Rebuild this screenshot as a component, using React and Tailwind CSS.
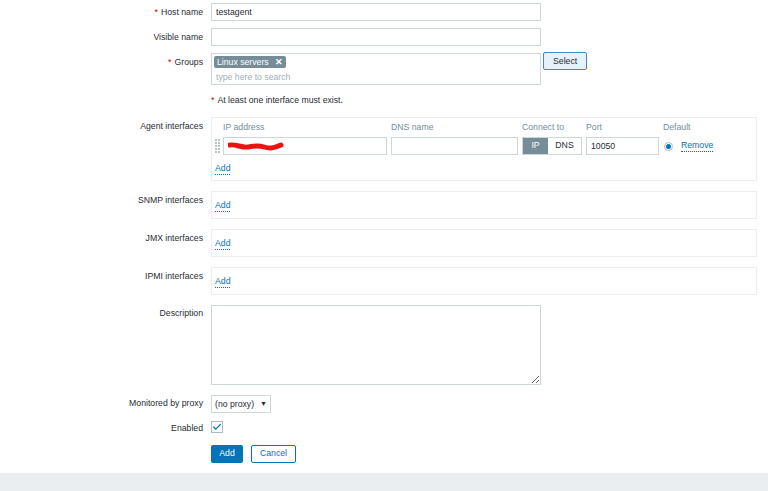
import { Check } from 'lucide-react';

const font = { fontFamily: '"Liberation Sans", Arial, sans-serif' };

function Label({ text, required, top = 'pt-[3px]' }) {
  return (
    <div className={`w-[203px] shrink-0 text-right leading-[12px] text-[#1f2c33] ${top}`}>
      {required && <span className="text-[#d40000] mr-[3px]">*</span>}
      {text}
    </div>
  );
}

function Row({ label, required, className = '', labelTop, children }) {
  return (
    <div className={`flex ${className}`}>
      <Label text={label} required={required} top={labelTop} />
      <div className="ml-2 flex-1">{children}</div>
    </div>
  );
}

function TextInput({ value, w = 'w-[330px]' }) {
  return (
    <input
      readOnly
      value={value || ''}
      className={`${w} h-[18px] border border-[#cfd6da] bg-white px-[4px] text-[8.7px] text-[#1f2c33] outline-none`}
    />
  );
}

function AddLink() {
  return (
    <span className="text-[#0275b8] border-b border-dotted border-[#0275b8] leading-[11px] inline-block">Add</span>
  );
}

function EmptyInterface({ label, className }) {
  return (
    <Row label={label} className={className} labelTop="pt-[3px]">
      <div className="w-[546px] h-[28px] border border-[#ebeef0] pl-[3px] pt-[7px]">
        <AddLink />
      </div>
    </Row>
  );
}

export default function App() {
  return (
    <div style={font} className="min-h-[491px] flex flex-col bg-white text-[8.7px] text-[#1f2c33]">
      <div className="pt-[3px]">
        {/* Host name */}
        <Row label="Host name" required>
          <TextInput value="testagent" />
        </Row>

        <Row label="Visible name" className="mt-[7px]">
          <TextInput />
        </Row>

        {/* Groups */}
        <Row label="Groups" required className="mt-[7px]">
          <div className="flex items-start gap-[2px]">
            <div className="w-[330px] h-[32px] border border-[#cfd6da] px-[2px] pt-[2px]">
              <span className="inline-flex items-center h-[12px] bg-[#768d99] text-white px-[3px] rounded-[2px] leading-[12px]">
                Linux servers
                <span className="ml-[6px] font-bold text-[9px]">✕</span>
              </span>
              <div className="text-[#a3b0b6] mt-[3px] ml-[2px] leading-[11px]">type here to search</div>
            </div>
            <button className="h-[18px] -mt-[1px] px-[9px] border border-[#3c8dc5] bg-[#e6f1f9] text-[#1f2c33] rounded-[2px] leading-[14px]">
              Select
            </button>
          </div>
        </Row>

        <Row label="" className="mt-[9px]">
          <div className="leading-[12px]"><span className="text-[#d40000] mr-[3px]">*</span>At least one interface must exist.</div>
        </Row>

        {/* Agent interfaces */}
        <Row label="Agent interfaces" className="mt-[11px]" labelTop="pt-[3px]">
          <div className="w-[546px] h-[64px] border border-[#ebeef0] pl-[3px] pt-[3px]">
            <div className="flex pl-[8px] text-[#768d99] leading-[12px]">
              <span className="w-[168px]">IP address</span>
              <span className="w-[131px]">DNS name</span>
              <span className="w-[64px]">Connect to</span>
              <span className="w-[77px]">Port</span>
              <span>Default</span>
            </div>
            <div className="flex items-center mt-[4px]">
              <div className="w-[8px] h-[17px] flex items-center">
                <svg width="6" height="14" viewBox="0 0 6 14">
                  {[0, 3, 6, 9, 12].map(y => (
                    <g key={y} fill="#b7c3c9">
                      <rect x="0" y={y} width="2" height="2" />
                      <rect x="3" y={y} width="2" height="2" />
                    </g>
                  ))}
                </svg>
              </div>
              <div className="relative w-[164px] h-[18px] border border-[#cfd6da] bg-white">
                <svg className="absolute left-[4px] top-[2px]" width="56" height="12" viewBox="0 0 56 12">
                  <path d="M2 5 C8 4, 14 8, 20 7 S 30 5, 36 7 S 46 8, 53 5" stroke="#ee1111" strokeWidth="5" fill="none" strokeLinecap="round" />
                </svg>
              </div>
              <div className="ml-[4px]"><TextInput w="w-[127px]" /></div>
              <div className="ml-[4px] flex h-[18px] w-[60px] border border-[#cfd6da]">
                <span className="w-[25px] bg-[#768d99] text-white flex items-center justify-center">IP</span>
                <span className="flex-1 bg-white flex items-center justify-center">DNS</span>
              </div>
              <div className="ml-[4px]"><TextInput value="10050" w="w-[73px]" /></div>
              <span className="ml-[5px] w-[9px] h-[9px] rounded-full border border-[#acbbc2] bg-white flex items-center justify-center">
                <span className="w-[5px] h-[5px] rounded-full bg-[#0275b8]" />
              </span>
              <span className="ml-[8px] text-[#0275b8] border-b border-dotted border-[#0275b8] leading-[11px]">Remove</span>
            </div>
            <div className="mt-[7px]"><AddLink /></div>
          </div>
        </Row>

        <EmptyInterface label="SNMP interfaces" className="mt-[10px]" />
        <EmptyInterface label="JMX interfaces" className="mt-[10px]" />
        <EmptyInterface label="IPMI interfaces" className="mt-[10px]" />

        <Row label="Description" className="mt-[10px]" labelTop="pt-[2px]">
          <textarea readOnly className="block w-[330px] h-[80px] border border-[#cfd6da] bg-white outline-none resize" />
        </Row>

        <Row label="Monitored by proxy" className="mt-[10px]" labelTop="pt-[2px]">
          <div className="inline-flex items-center h-[18px] w-[60px] border border-[#cfd6da] px-[3px] leading-[12px]">
            (no proxy)
            <span className="ml-auto text-[7px]">▼</span>
          </div>
        </Row>

        <Row label="Enabled" className="mt-[8px]" labelTop="pt-[1px]">
          <div className="w-[12px] h-[12px] border border-[#acbbc2] bg-white flex items-center justify-center">
            <Check size={10} strokeWidth={3} color="#0275b8" />
          </div>
        </Row>

        <Row label="" className="mt-[11px]">
          <div className="flex gap-[8px]">
            <button className="h-[18px] w-[32px] bg-[#0275b8] text-white rounded-[2px]">Add</button>
            <button className="h-[18px] w-[45px] border border-[#0275b8] text-[#0275b8] bg-white rounded-[2px]">Cancel</button>
          </div>
        </Row>
      </div>
      <div className="mt-[10px] flex-1 bg-[#ebeef0]" />
    </div>
  );
}
